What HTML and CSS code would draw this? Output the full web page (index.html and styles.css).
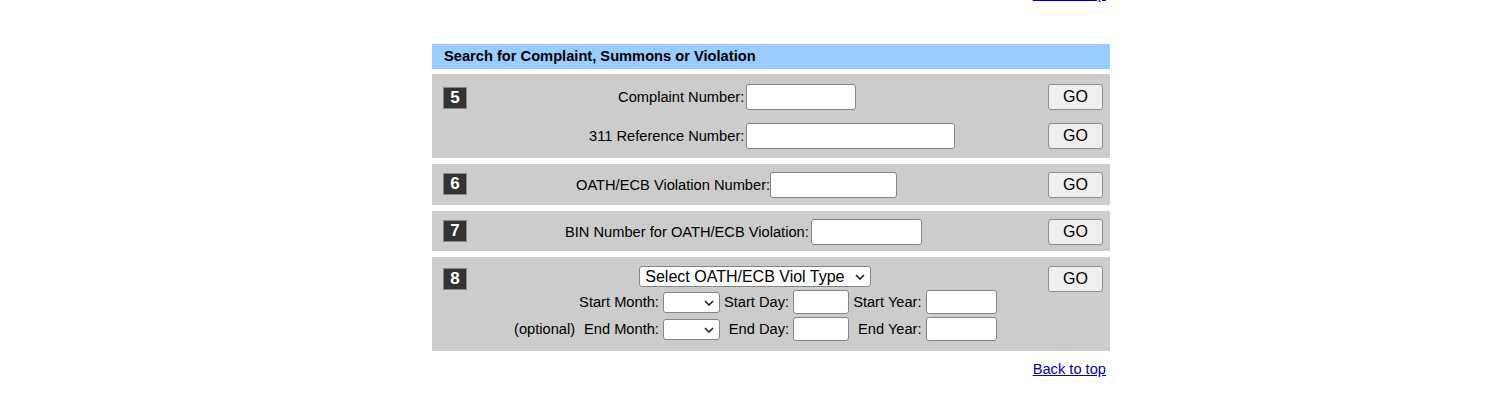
FILE: index.html
```html
<!DOCTYPE html>
<html lang="en">
<head>
  <meta charset="UTF-8">
  <title>Search for Complaint, Summons or Violation</title>
  <link rel="stylesheet" href="styles.css">
</head>
<body>
<div class="page">
  <div class="top-link"><a href="#top">Back to top</a></div>

  <div class="search-title">Search for Complaint, Summons or Violation</div>

  <div class="search-row row-5">
    <span class="num">5</span>
    <div class="fields fields-5">
      <label for="complaint">Complaint Number:</label>
      <input type="text" id="complaint" class="in-complaint">
      <label for="ref311">311 Reference Number:</label>
      <input type="text" id="ref311" class="in-ref">
    </div>
    <div class="go-col">
      <button type="button" class="go-btn">GO</button>
      <button type="button" class="go-btn">GO</button>
    </div>
  </div>

  <div class="search-row row-6">
    <span class="num">6</span>
    <div class="fields fields-6">
      <label for="oath">OATH/ECB Violation Number:</label>
      <input type="text" id="oath" class="in-oath">
    </div>
    <div class="go-col">
      <button type="button" class="go-btn">GO</button>
    </div>
  </div>

  <div class="search-row row-7">
    <span class="num">7</span>
    <div class="fields fields-7">
      <label for="bin">BIN Number for OATH/ECB Violation:</label>
      <input type="text" id="bin" class="in-bin">
    </div>
    <div class="go-col">
      <button type="button" class="go-btn">GO</button>
    </div>
  </div>

  <div class="search-row row-8">
    <span class="num">8</span>
    <div class="fields-8">
      <span class="select-wrap">
        <select class="viol-type">
          <option>Select OATH/ECB Viol Type</option>
        </select>
        <svg class="chev" width="10" height="6" viewBox="0 0 10 6"><path d="M1 1l4 4 4-4" fill="none" stroke="#222" stroke-width="1.6"/></svg>
      </span>
      <div class="date-grid">
        <span></span>
        <label>Start Month:</label>
        <span class="select-wrap">
          <select class="month"><option></option></select>
          <svg class="chev" width="10" height="6" viewBox="0 0 10 6"><path d="M1 1l4 4 4-4" fill="none" stroke="#222" stroke-width="1.6"/></svg>
        </span>
        <label>Start Day:</label>
        <input type="text" class="in-day">
        <label>Start Year:</label>
        <input type="text" class="in-year">

        <span>(optional)</span>
        <label>End Month:</label>
        <span class="select-wrap">
          <select class="month"><option></option></select>
          <svg class="chev" width="10" height="6" viewBox="0 0 10 6"><path d="M1 1l4 4 4-4" fill="none" stroke="#222" stroke-width="1.6"/></svg>
        </span>
        <label>End Day:</label>
        <input type="text" class="in-day">
        <label>End Year:</label>
        <input type="text" class="in-year">
      </div>
    </div>
    <div class="go-col">
      <button type="button" class="go-btn">GO</button>
    </div>
  </div>

  <div class="bottom-link"><a href="#top">Back to top</a></div>
</div>
</body>
</html>
```

FILE: styles.css
```css
body {
  margin: 0;
  background: #fff;
  color: #000;
  font-family: "Liberation Sans", Arial, sans-serif;
  font-size: 14.67px;
}
.page {
  width: 678px;
  margin-left: 432px;
}
a { color: #00c; }
.top-link, .bottom-link {
  text-align: right;
  padding-right: 4px;
  line-height: 17px;
}
.top-link {
  margin-top: -14px;
  margin-bottom: 41px;
}
.bottom-link { margin-top: 10px; }
.search-title {
  background: #99ccff;
  font-weight: bold;
  height: 25px;
  line-height: 25px;
  padding-left: 12px;
  margin-bottom: 5px;
}
.search-row {
  display: flex;
  align-items: flex-start;
  background: #ccc;
  margin-bottom: 6px;
  padding: 10px 7px 9px 11px;
}
.row-6 { padding: 8px 7px 7px 11px; }
.row-7 { padding: 8px 7px 6px 11px; }
.row-8 { padding: 9px 7px 10px 11px; }
.num {
  box-sizing: border-box;
  width: 24px;
  height: 22px;
  line-height: 20px;
  margin-top: 3px;
  background: #333;
  border: 1px solid #8a8a8a;
  color: #fff;
  font-weight: bold;
  font-size: 17px;
  text-align: center;
}
.row-6 .num, .row-7 .num { margin-top: 1px; }
.row-8 .num { margin-top: 2px; }
.fields {
  display: grid;
  grid-template-columns: auto auto;
  column-gap: 2px;
  row-gap: 13px;
  align-items: center;
}
.fields label { text-align: right; }
.fields-5 { margin-left: 122px; }
.fields-6 { margin-left: 109px; column-gap: 0; }
.fields-7 { margin-left: 98px; }
.fields-8 {
  margin-left: 47px;
  display: flex;
  flex-direction: column;
  align-items: center;
  gap: 3px;
}
.date-grid {
  display: grid;
  grid-template-columns: auto auto 57px auto 56px auto 71px;
  column-gap: 4px;
  row-gap: 3px;
  align-items: center;
}
.date-grid label { text-align: right; }
input, select {
  box-sizing: border-box;
  margin: 0;
  background: #fff;
  border: 1px solid #858585;
  border-radius: 3px;
  font-family: "Liberation Sans", Arial, sans-serif;
  outline: none;
}
select {
  -webkit-appearance: none;
  appearance: none;
  padding: 0 18px 0 5px;
  color: #000;
}
.select-wrap {
  position: relative;
  display: inline-flex;
}
.chev {
  position: absolute;
  right: 6px;
  top: 8px;
  pointer-events: none;
}
.fields input { height: 26px; }
.in-complaint { width: 110px; }
.in-ref { width: 209px; }
.in-oath { width: 127px; }
.in-bin { width: 111px; }
.in-day { width: 56px; height: 24px; }
.in-year { width: 71px; height: 24px; }
.month { width: 57px; height: 21px; font-size: 16px; }
.viol-type { width: 232px; height: 21px; font-size: 16px; }
.go-btn {
  width: 55px;
  height: 26px;
  padding: 0;
  background: #efefef;
  border: 1px solid #8f8f8f;
  border-radius: 3px;
  color: #000;
  font-family: "Liberation Sans", Arial, sans-serif;
  font-size: 16px;
}
.go-col {
  margin-left: auto;
  display: flex;
  flex-direction: column;
  gap: 13px;
}
```
